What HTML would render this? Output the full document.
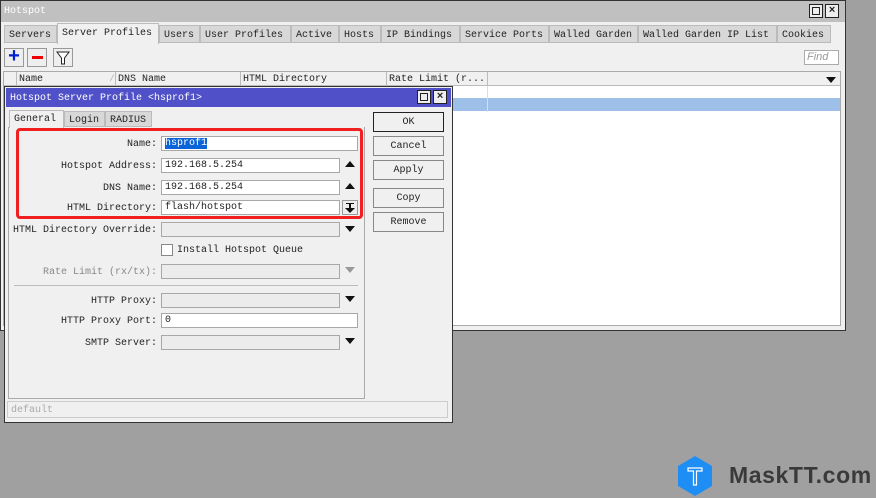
<!DOCTYPE html><html><head><style>
*{box-sizing:border-box;margin:0;padding:0}
body{width:876px;height:498px;background:#a0a0a0;position:relative;overflow:hidden;font-family:"Liberation Mono",monospace;font-size:10px;color:#222}
.a{position:absolute}
.tab{position:absolute;top:25px;height:18px;background:#d8d8d8;border:1px solid #bbb;padding:4px 4px 0;white-space:nowrap}
.inp{position:absolute;height:15px;background:#fff;border:1px solid #a8a8a8;padding:0 3px;line-height:13px;white-space:nowrap}
.dis{background:#ececec}
.lbl{position:absolute;right:719px;text-align:right;white-space:nowrap}
.btn{position:absolute;left:373px;width:71px;height:20px;border:1px solid #888;background:#f0f0f0;text-align:center;line-height:19px}
.dn{position:absolute;width:0;height:0;border-left:5px solid transparent;border-right:5px solid transparent;border-top:6px solid #111}
.up{position:absolute;width:0;height:0;border-left:5px solid transparent;border-right:5px solid transparent;border-bottom:6px solid #111}
</style></head><body>
<div class="a" style="left:0;top:0;width:846px;height:331px;background:#f0f0f0;border:1px solid #333"></div>
<div class="a" style="left:1px;top:1px;width:844px;height:21px;background:#c0c0c0;color:#fff;padding:5px 3px">Hotspot</div>
<div class="a" style="left:809px;top:4px;width:14px;height:14px;border:1px solid #222;background:#eee"><div class="a" style="left:2px;top:2px;width:8px;height:8px;border:1px solid #222"></div></div>
<div class="a" style="left:825px;top:4px;width:14px;height:14px;border:1px solid #222;background:#eee;font-size:11px;line-height:12px;text-align:center;font-weight:bold">×</div>
<div class="tab" style="left:4px;width:53px">Servers</div>
<div class="tab" style="left:57px;top:23px;height:21px;width:102px;background:#f0f0f0;border-bottom:none">Server Profiles</div>
<div class="tab" style="left:159px;width:41px">Users</div>
<div class="tab" style="left:200px;width:91px">User Profiles</div>
<div class="tab" style="left:291px;width:48px">Active</div>
<div class="tab" style="left:339px;width:42px">Hosts</div>
<div class="tab" style="left:381px;width:79px">IP Bindings</div>
<div class="tab" style="left:460px;width:89px">Service Ports</div>
<div class="tab" style="left:549px;width:89px">Walled Garden</div>
<div class="tab" style="left:638px;width:139px">Walled Garden IP List</div>
<div class="tab" style="left:777px;width:54px">Cookies</div>
<div class="a" style="left:4px;top:48px;width:20px;height:19px;border:1px solid #999;background:#eee;color:#0020d0;font-size:20px;font-weight:bold;line-height:18px;text-align:center">+</div>
<div class="a" style="left:27px;top:48px;width:20px;height:19px;border:1px solid #999;background:#eee"><div class="a" style="left:4px;top:7px;width:11px;height:3px;background:#e00"></div></div>
<div class="a" style="left:53px;top:48px;width:20px;height:19px;border:1px solid #999;background:#eee"><svg width="18" height="17"><path d="M3 3h12l-4.5 6v6h-3v-6z" fill="#fff" stroke="#222"/></svg></div>
<div class="a" style="left:804px;top:50px;width:35px;height:15px;border:1px solid #aaa;background:#fff;color:#999;font-family:'Liberation Sans';font-style:italic;font-size:11px;padding-left:2px">Find</div>
<div class="a" style="left:3px;top:71px;width:838px;height:255px;background:#fff;border:1px solid #aaa"></div>
<div class="a" style="left:4px;top:72px;width:836px;height:14px;background:#f0f0f0;border-bottom:1px solid #bbb"></div>
<div class="a" style="left:16px;top:72px;padding:2px 0 0 2px;height:14px;border-left:1px solid #bbb;width:99px">Name<span style="float:right;color:#999">⁄</span></div>
<div class="a" style="left:115px;top:72px;padding:2px 0 0 2px;height:14px;border-left:1px solid #bbb;width:125px">DNS Name</div>
<div class="a" style="left:240px;top:72px;padding:2px 0 0 2px;height:14px;border-left:1px solid #bbb;width:146px">HTML Directory</div>
<div class="a" style="left:386px;top:72px;padding:2px 0 0 2px;height:14px;border-left:1px solid #bbb;width:101px">Rate Limit (r...</div>
<div class="a" style="left:487px;top:72px;height:14px;border-left:1px solid #bbb;width:1px"></div>
<div class="dn" style="left:826px;top:77px"></div>
<div class="a" style="left:4px;top:98px;width:836px;height:13px;background:#9dbfe8"></div>
<div class="a" style="left:487px;top:86px;height:26px;border-left:1px solid #ddd;width:1px"></div>
<!-- dialog -->
<div class="a" style="left:4px;top:86px;width:449px;height:337px;background:#f0f0f0;border:1px solid #333"></div>
<div class="a" style="left:6px;top:88px;width:445px;height:19px;background:#5050c8;color:#fff;padding:5px 4px 0">Hotspot Server Profile &lt;hsprof1&gt;</div>
<div class="a" style="left:417px;top:90px;width:14px;height:14px;border:1px solid #222;background:#eee"><div class="a" style="left:2px;top:2px;width:8px;height:8px;border:1px solid #222"></div></div>
<div class="a" style="left:433px;top:90px;width:14px;height:14px;border:1px solid #222;background:#eee;font-size:11px;line-height:12px;text-align:center;font-weight:bold">×</div>
<div class="a" style="left:8px;top:127px;width:357px;height:272px;border:1px solid #aaa;border-top:none"></div>
<div class="tab" style="left:9px;top:110px;height:18px;width:55px;background:#f0f0f0;border-bottom:none;padding:3px 4px 0">General</div>
<div class="tab" style="left:64px;top:111px;height:16px;width:41px;padding:3px 4px 0">Login</div>
<div class="tab" style="left:105px;top:111px;height:16px;width:47px;padding:3px 4px 0">RADIUS</div>
<div class="btn" style="top:112px;border-color:#222">OK</div>
<div class="btn" style="top:136px">Cancel</div>
<div class="btn" style="top:160px">Apply</div>
<div class="btn" style="top:188px">Copy</div>
<div class="btn" style="top:212px">Remove</div>
<div class="lbl" style="top:139px">Name:</div>
<div class="inp" style="left:161px;top:136px;width:197px"><span style="background:#0a64d8;color:#fff">hsprof1</span></div>
<div class="lbl" style="top:161px">Hotspot Address:</div>
<div class="inp" style="left:161px;top:158px;width:179px">192.168.5.254</div><div class="up" style="left:345px;top:161px"></div>
<div class="lbl" style="top:183px">DNS Name:</div>
<div class="inp" style="left:161px;top:180px;width:179px">192.168.5.254</div><div class="up" style="left:345px;top:183px"></div>
<div class="lbl" style="top:203px">HTML Directory:</div>
<div class="inp" style="left:161px;top:200px;width:179px">flash/hotspot</div>
<div class="a" style="left:342px;top:200px;width:16px;height:15px;border:1px solid #999;background:#eee"><div class="a" style="left:3px;top:2px;width:8px;height:1px;background:#111"></div><div class="a" style="left:6px;top:3px;width:2px;height:4px;background:#111"></div><div class="dn" style="left:2px;top:7px;border-left-width:5px;border-right-width:5px;border-top-width:5px"></div></div>
<div class="lbl" style="top:225px">HTML Directory Override:</div>
<div class="inp dis" style="left:161px;top:222px;width:179px"></div><div class="dn" style="left:345px;top:226px"></div>
<div class="a" style="left:161px;top:244px;width:12px;height:12px;border:1px solid #888;background:#fff"></div>
<div class="a" style="left:177px;top:245px">Install Hotspot Queue</div>
<div class="lbl" style="top:267px;color:#888">Rate Limit (rx/tx):</div>
<div class="inp dis" style="left:161px;top:264px;width:179px"></div><div class="dn" style="left:345px;top:267px;border-top-color:#999"></div>
<div class="a" style="left:14px;top:285px;width:344px;height:1px;background:#bbb"></div>
<div class="lbl" style="top:296px">HTTP Proxy:</div>
<div class="inp dis" style="left:161px;top:293px;width:179px"></div><div class="dn" style="left:345px;top:296px"></div>
<div class="lbl" style="top:316px">HTTP Proxy Port:</div>
<div class="inp" style="left:161px;top:313px;width:197px">0</div>
<div class="lbl" style="top:338px">SMTP Server:</div>
<div class="inp dis" style="left:161px;top:335px;width:179px"></div><div class="dn" style="left:345px;top:338px"></div>
<div class="a" style="left:16px;top:128px;width:347px;height:91px;border:3px solid #f02020;border-radius:4px"></div>
<div class="a" style="left:7px;top:401px;width:441px;height:17px;border:1px solid #ccc;color:#aaa;padding:3px 3px 0">default</div>
<!-- logo -->
<svg class="a" style="left:676px;top:455px" width="38" height="42"><path d="M19 1L36 11V31L19 41L2 31V11Z" fill="#1e8ef5"/><path d="M12 13h14v3h-5.5v14h-3V16H12z" fill="#1e8ef5" stroke="#fff" stroke-width="1.2"/></svg>
<div class="a" style="left:729px;top:462px;font-family:'Liberation Sans',sans-serif;font-weight:bold;font-size:23px;letter-spacing:0.6px;color:#3a3a3a">MaskTT.com</div>
</body></html>
